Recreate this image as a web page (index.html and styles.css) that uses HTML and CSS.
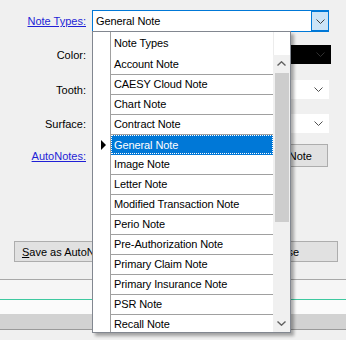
FILE: index.html
```html
<!DOCTYPE html>
<html>
<head>
<meta charset="utf-8">
<link rel="stylesheet" href="styles.css">
</head>
<body>
<div class="form">
  <div class="row r-type">
    <a class="lbl link">Note Types:</a>
    <div class="combo focus">
      <span class="val">General Note</span>
      <span class="dbtn"><svg width="9" height="5" viewBox="0 0 9 5"><path d="M0.5 0.5 L4.5 4.5 L8.5 0.5" fill="none" stroke="#404040" stroke-width="1"/></svg></span>
    </div>
  </div>
  <div class="row r-color">
    <span class="lbl">Color:</span>
    <div class="combo black">
      <span class="chev"><svg width="9" height="5" viewBox="0 0 9 5"><path d="M0.5 0.5 L4.5 4.5 L8.5 0.5" fill="none" stroke="#303030" stroke-width="1"/></svg></span>
    </div>
  </div>
  <div class="row r-tooth">
    <span class="lbl">Tooth:</span>
    <div class="combo white">
      <span class="chev"><svg width="9" height="5" viewBox="0 0 9 5"><path d="M0.5 0.5 L4.5 4.5 L8.5 0.5" fill="none" stroke="#505050" stroke-width="1"/></svg></span>
    </div>
  </div>
  <div class="row r-surf">
    <span class="lbl">Surface:</span>
    <div class="combo white">
      <span class="chev"><svg width="9" height="5" viewBox="0 0 9 5"><path d="M0.5 0.5 L4.5 4.5 L8.5 0.5" fill="none" stroke="#505050" stroke-width="1"/></svg></span>
    </div>
  </div>
  <div class="row r-auto">
    <a class="lbl link">AutoNotes:</a>
    <div class="ctl">
      <button class="wbtn add">Add Note</button>
    </div>
  </div>
  <div class="actions">
    <button class="wbtn save"><u>S</u>ave as AutoNote</button>
    <button class="wbtn close">Close</button>
  </div>
  <div class="bottom">
    <div class="b-top"></div>
    <div class="b-white"></div>
    <div class="b-band"></div>
  </div>
</div>

<div class="dropdown">
  <div class="hdr">
    <div class="rh"></div>
    <div class="hcell">Note Types</div>
    <div class="corner"></div>
  </div>
  <div class="body">
    <div class="rows">
      <div class="item"><div class="rh"></div><div class="cell">Account Note</div></div>
      <div class="item"><div class="rh"></div><div class="cell">CAESY Cloud Note</div></div>
      <div class="item"><div class="rh"></div><div class="cell">Chart Note</div></div>
      <div class="item"><div class="rh"></div><div class="cell">Contract Note</div></div>
      <div class="item"><div class="rh"><span class="tri"></span></div><div class="cell sel"><span class="focusbox">General Note</span></div></div>
      <div class="item"><div class="rh"></div><div class="cell">Image Note</div></div>
      <div class="item"><div class="rh"></div><div class="cell">Letter Note</div></div>
      <div class="item"><div class="rh"></div><div class="cell">Modified Transaction Note</div></div>
      <div class="item"><div class="rh"></div><div class="cell">Perio Note</div></div>
      <div class="item"><div class="rh"></div><div class="cell">Pre-Authorization Note</div></div>
      <div class="item"><div class="rh"></div><div class="cell">Primary Claim Note</div></div>
      <div class="item"><div class="rh"></div><div class="cell">Primary Insurance Note</div></div>
      <div class="item"><div class="rh"></div><div class="cell">PSR Note</div></div>
      <div class="item"><div class="rh"></div><div class="cell">Recall Note</div></div>
    </div>
    <div class="sbar">
      <div class="arrow"><svg width="9" height="5" viewBox="0 0 9 5"><path d="M0.5 4.5 L4.5 0.8 L8.5 4.5" fill="none" stroke="#606060" stroke-width="1.4"/></svg></div>
      <div class="track"><div class="thumb"></div></div>
      <div class="arrow"><svg width="9" height="5" viewBox="0 0 9 5"><path d="M0.5 0.5 L4.5 4.2 L8.5 0.5" fill="none" stroke="#606060" stroke-width="1.4"/></svg></div>
    </div>
  </div>
</div>
</body>
</html>
```

FILE: styles.css
```css
html, body {
  margin: 0;
  padding: 0;
  background: #f0f0f0;
}
body {
  width: 346px;
  height: 340px;
  overflow: hidden;
  position: relative;
  font-family: "Liberation Sans", Arial, sans-serif;
  font-size: 11px;
  color: #000;
}
.form {
  padding-top: 10px;
}
.row {
  display: flex;
  align-items: center;
}
.lbl {
  width: 86px;
  flex: none;
  text-align: right;
  margin-right: 6px;
  box-sizing: border-box;
}
.link {
  color: #1f1fd6;
  text-decoration: underline;
}
.r-type { height: 22px; }
.r-color { margin-top: 13px; height: 19px; }
.r-tooth { margin-top: 16px; height: 19px; }
.r-surf { margin-top: 15px; height: 19px; }
.r-auto { margin-top: 11px; height: 23px; }

.combo {
  box-sizing: border-box;
  width: 237px;
  height: 100%;
  display: flex;
  align-items: center;
  background: #fff;
}
.combo.focus {
  border: 1px solid #0078d7;
}
.combo .val {
  padding-left: 3px;
  flex: 1;
  letter-spacing: -0.1px;
}
.dbtn {
  box-sizing: border-box;
  width: 18px;
  height: 20px;
  border: 1px solid #0078d7;
  margin-right: -1px;
  background: #cce4f7;
  display: flex;
  align-items: center;
  justify-content: center;
}
.combo.black {
  background: #000;
  width: 239px;
  justify-content: flex-end;
}
.combo.white {
  justify-content: flex-end;
}
.chev {
  width: 17px;
  margin-right: 2px;
  display: flex;
  justify-content: center;
}
.ctl {
  width: 237px;
  height: 100%;
  display: flex;
  justify-content: flex-end;
}
.wbtn {
  box-sizing: border-box;
  font-family: "Liberation Sans", Arial, sans-serif;
  font-size: 11px;
  background: #e1e1e1;
  border: 1px solid #adadad;
  padding: 0;
  color: #000;
}
.add {
  width: 78px;
  height: 23px;
  margin-right: 1px;
}
.actions {
  margin-top: 74px;
  display: flex;
  height: 21px;
}
.save {
  margin-left: 14px;
  width: 104px;
}
.close {
  margin-left: auto;
  margin-right: 8px;
  width: 106px;
}
.bottom {
  margin-top: 17px;
}
.b-top {
  height: 19px;
  border-top: 1px solid #a8a8a8;
  border-bottom: 1px solid #3ec9a0;
  background: #f6f6f6;
}
.b-white {
  height: 14px;
  background: #fbfbfb;
}
.b-band {
  height: 15px;
  background: #d2d2d2;
  border-bottom: 1px solid #9a9a9a;
}

/* dropdown list overlay */
.dropdown {
  position: absolute;
  left: 92px;
  top: 31px;
  width: 199px;
  height: 302px;
  box-sizing: border-box;
  border: 1px solid #828790;
  background: #fff;
  box-shadow: 3px 3px 3px rgba(0, 0, 0, 0.32);
  display: flex;
  flex-direction: column;
  overflow: hidden;
}
.rh {
  width: 17px;
  flex: none;
  border-right: 1px solid #a0a0a0;
  position: relative;
}
.hdr {
  display: flex;
  height: 23px;
  flex: none;
}
.hcell {
  flex: 1;
  padding-left: 3px;
  line-height: 23px;
  letter-spacing: -0.1px;
}
.corner {
  width: 16px;
  border-left: 1px solid #ececec;
}
.body {
  flex: 1;
  display: flex;
  min-height: 0;
}
.rows {
  flex: 1;
  overflow: hidden;
}
.item {
  display: flex;
  height: 20px;
}
.cell {
  flex: 1;
  box-sizing: border-box;
  border-bottom: 1px solid #a0a0a0;
  padding-left: 3px;
  line-height: 19px;
  white-space: nowrap;
  letter-spacing: -0.1px;
}
.cell.sel {
  background: #0078d7;
  color: #fff;
  padding: 0;
  border-bottom-color: #0078d7;
}
.focusbox {
  display: block;
  height: 100%;
  box-sizing: border-box;
  border: 1px dotted #ffffff;
  padding-left: 2px;
  line-height: 18px;
}
.tri {
  position: absolute;
  left: 8px;
  top: 5px;
  width: 0;
  height: 0;
  border-top: 5px solid transparent;
  border-bottom: 5px solid transparent;
  border-left: 5px solid #000;
}
.sbar {
  width: 17px;
  flex: none;
  background: #f0f0f0;
  display: flex;
  flex-direction: column;
}
.arrow {
  height: 17px;
  flex: none;
  display: flex;
  align-items: center;
  justify-content: center;
}
.track {
  flex: 1;
  display: flex;
  justify-content: center;
}
.thumb {
  width: 14px;
  height: 149px;
  margin-top: 1px;
  background: #cdcdcd;
}
```
